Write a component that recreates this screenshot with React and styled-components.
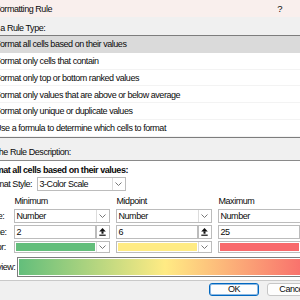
import React from 'react';
import styled, { createGlobalStyle } from 'styled-components';

const Global = createGlobalStyle`
  html, body {
    margin: 0;
    padding: 0;
    width: 300px;
    height: 300px;
    overflow: hidden;
    background: #f0f0f0;
  }
  body {
    font-family: "Liberation Sans", Arial, sans-serif;
    font-size: 9px;
    letter-spacing: -0.45px;
    color: #0a0a0a;
  }
  * { box-sizing: border-box; }
`;

const Dialog = styled.div`
  width: 370px;
  height: 300px;
  margin-left: -30px;
  display: flex;
  flex-direction: column;
  background: #f0f0f0;
`;

const TitleBar = styled.div`
  height: 17px;
  flex: none;
  background: #f9efed;
  display: flex;
  align-items: center;
  justify-content: space-between;
  padding-left: 9px;
  line-height: 12px;
`;

const TitleText = styled.span`
  white-space: nowrap;
`;

const TitleButtons = styled.div`
  display: flex;
  height: 100%;
`;

const TitleButton = styled.div`
  width: ${p => p.$w}px;
  display: flex;
  align-items: center;
  justify-content: center;
  font-size: 9.5px;
  letter-spacing: 0;
`;

const Content = styled.div`
  padding: 0 10px;
  display: flex;
  flex-direction: column;
`;

const SectionLabel = styled.div`
  line-height: 12px;
  white-space: nowrap;
  padding: ${p => p.$top}px 0 ${p => p.$bottom}px 0;
  margin-left: ${p => p.$indent}px;
`;

const RuleList = styled.div`
  background: #fff;
  border: 1px solid #7d7d7d;
  display: flex;
  flex-direction: column;
`;

const RuleItem = styled.div`
  height: 16.75px;
  display: flex;
  align-items: center;
  padding-left: 2px;
  background: ${p => (p.$selected ? '#dadada' : '#fff')};
  box-shadow: inset 0 -1px 0 ${p => (p.$selected ? '#dadada' : '#f3f3f3')};
  line-height: 12px;
  white-space: nowrap;
`;

const RuleArrow = styled.span`
  width: 12px;
  flex: none;
  font-size: 7px;
`;

const DescPanel = styled.div`
  background: #fff;
  border-top: 1px solid #8a8a8a;
  border-left: 1px solid #8a8a8a;
  border-bottom: 1px solid #c9c9c9;
  padding: 3px 0 3px 1.5px;
  display: flex;
  flex-direction: column;
  margin-right: -40px;
`;

const PanelHeading = styled.div`
  font-weight: bold;
  line-height: 12px;
  white-space: nowrap;
`;

const Indented = styled.div`
  margin-left: 2px;
`;

const StyleRow = styled(Indented)`
  display: flex;
  align-items: center;
  margin-top: 1px;
`;

const FieldLabel = styled.span`
  width: ${p => (p.$w ? `${p.$w}px` : 'auto')};
  flex: none;
  line-height: 12px;
  white-space: nowrap;
`;

const ComboBox = styled.div`
  width: ${p => p.$w}px;
  height: 14px;
  border: 1px solid #bcbcbc;
  background: #fff;
  display: flex;
  align-items: stretch;
`;

const ComboText = styled.span`
  flex: 1;
  padding-left: 2px;
  display: flex;
  align-items: center;
  white-space: nowrap;
  overflow: hidden;
`;

const ChevronBox = styled.span`
  width: 13px;
  flex: none;
  border-left: 1px solid #dcdcdc;
  display: flex;
  align-items: center;
  justify-content: center;
`;

const Chevron = () => (
  <svg width="7" height="4" viewBox="0 0 7 4">
    <polyline points="0.5,0.5 3.5,3.5 6.5,0.5" fill="none" stroke="#777" strokeWidth="1" />
  </svg>
);

const ScaleGrid = styled(Indented)`
  margin-top: 4px;
  display: grid;
  grid-template-columns: 23px repeat(3, 96px);
  grid-template-rows: 12px 14px 14px 12px;
  column-gap: 6px;
  row-gap: 2px;
  align-items: center;
`;

const ColumnHeader = styled.span`
  padding-left: 1px;
  line-height: 12px;
  white-space: nowrap;
`;

const ValueGroup = styled.div`
  display: flex;
  height: 14px;
`;

const TextInput = styled.div`
  width: 82px;
  height: 14px;
  border: 1px solid #bcbcbc;
  background: #fff;
  padding-left: 2px;
  display: flex;
  align-items: center;
`;

const RangeButton = styled.div`
  width: 14px;
  height: 14px;
  border: 1px solid #bcbcbc;
  background: #fff;
  display: flex;
  align-items: center;
  justify-content: center;
`;

const RangeIcon = () => (
  <svg width="7" height="8" viewBox="0 0 7 8">
    <polygon points="3.5,0 0.2,3.4 6.8,3.4" fill="#111" />
    <rect x="2.5" y="3.3" width="2" height="2.4" fill="#111" />
    <rect x="0.3" y="6.6" width="6.4" height="1.2" fill="#111" />
  </svg>
);

const ColorPicker = styled.div`
  width: 96px;
  height: 12px;
  border: 1px solid #bcbcbc;
  background: #fff;
  display: flex;
`;

const Swatch = styled.span`
  flex: 1;
  margin: 1px;
  background: ${p => p.$color};
`;

const PreviewRow = styled(Indented)`
  display: flex;
  align-items: center;
  margin-top: 4px;
`;

const PreviewBox = styled.div`
  width: 296px;
  height: 20px;
  border: 1px solid #7d7d7d;
  background: #fff;
  padding: 1px;
  display: flex;
`;

const PreviewGradient = styled.div`
  flex: 1;
  background: linear-gradient(to right, #63be7b 0%, #ffeb84 50%, #f8696b 100%);
`;

const Footer = styled.div`
  flex: 1;
  display: flex;
  justify-content: flex-end;
  align-items: flex-start;
  gap: 8px;
  padding: 2px 23px 0 0;
`;

const DialogButton = styled.div`
  width: 50px;
  height: 13px;
  border-radius: 3px;
  background: #fdfdfd;
  border: 1px solid ${p => (p.$primary ? '#0067c0' : '#c6c6c6')};
  box-shadow: ${p => (p.$primary ? 'inset 0 0 0 1px #8cb8e2' : 'none')};
  display: flex;
  align-items: center;
  justify-content: center;
  line-height: 11px;
`;

const rules = [
  'Format all cells based on their values',
  'Format only cells that contain',
  'Format only top or bottom ranked values',
  'Format only values that are above or below average',
  'Format only unique or duplicate values',
  'Use a formula to determine which cells to format',
];

const columns = [
  { name: 'Minimum', value: '2', color: '#63be7b' },
  { name: 'Midpoint', value: '6', color: '#ffeb84' },
  { name: 'Maximum', value: '25', color: '#f8696b' },
];

export default function App() {
  return (
    <>
      <Global />
      <Dialog>
        <TitleBar>
          <TitleText>Edit Formatting Rule</TitleText>
          <TitleButtons>
            <TitleButton $w={28}>?</TitleButton>
            <TitleButton $w={46}>✕</TitleButton>
          </TitleButtons>
        </TitleBar>
        <Content>
          <SectionLabel $top={5} $bottom={1} $indent={-4}>Select a Rule Type:</SectionLabel>
          <RuleList>
            {rules.map((r, i) => (
              <RuleItem key={r} $selected={i === 0}>
                <RuleArrow>►</RuleArrow>
                {r}
              </RuleItem>
            ))}
          </RuleList>
          <SectionLabel $top={8.5} $bottom={2} $indent={1}>Edit the Rule Description:</SectionLabel>
          <DescPanel>
            <PanelHeading>Format all cells based on their values:</PanelHeading>
            <StyleRow>
              <FieldLabel $w={52}>Format Style:</FieldLabel>
              <ComboBox $w={89}>
                <ComboText>3-Color Scale</ComboText>
                <ChevronBox><Chevron /></ChevronBox>
              </ComboBox>
            </StyleRow>
            <ScaleGrid>
              <span />
              {columns.map(c => (
                <ColumnHeader key={c.name}>{c.name}</ColumnHeader>
              ))}
              <FieldLabel>Type:</FieldLabel>
              {columns.map(c => (
                <ComboBox key={c.name} $w={96}>
                  <ComboText>Number</ComboText>
                  <ChevronBox><Chevron /></ChevronBox>
                </ComboBox>
              ))}
              <FieldLabel>Value:</FieldLabel>
              {columns.map(c => (
                <ValueGroup key={c.name}>
                  <TextInput>{c.value}</TextInput>
                  <RangeButton><RangeIcon /></RangeButton>
                </ValueGroup>
              ))}
              <FieldLabel>Color:</FieldLabel>
              {columns.map(c => (
                <ColorPicker key={c.name}>
                  <Swatch $color={c.color} />
                  <ChevronBox><Chevron /></ChevronBox>
                </ColorPicker>
              ))}
            </ScaleGrid>
            <PreviewRow>
              <FieldLabel $w={32}>Preview:</FieldLabel>
              <PreviewBox>
                <PreviewGradient />
              </PreviewBox>
            </PreviewRow>
          </DescPanel>
        </Content>
        <Footer>
          <DialogButton $primary>OK</DialogButton>
          <DialogButton>Cancel</DialogButton>
        </Footer>
      </Dialog>
    </>
  );
}
